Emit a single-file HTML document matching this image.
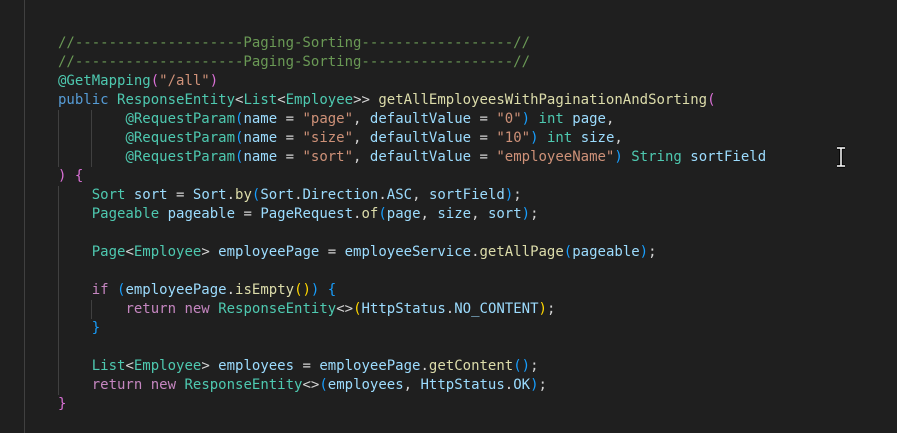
<!DOCTYPE html>
<html><head><meta charset="utf-8"><style>
html,body{margin:0;padding:0;background:#1f1f1f;width:897px;height:433px;overflow:hidden}
.g{position:absolute;width:1px;background:#404040}
pre{position:absolute;left:58px;top:34px;margin:0;font-family:"DejaVu Sans Mono","Liberation Mono",monospace;font-size:14px;line-height:19px;color:#d4d4d4}
.c{color:#6a9955}.t{color:#4ec9b0}.k{color:#569cd6}.f{color:#dcdcaa}.v{color:#9cdcfe}.s{color:#ce9178}.r{color:#c586c0}
.y{color:#ffd700}.p{color:#da70d6}.b{color:#179fff}
</style></head><body>
<div class="g" style="left:24px;top:0;height:433px"></div>
<div class="g" style="left:58px;top:110px;height:57px"></div>
<div class="g" style="left:91px;top:110px;height:57px"></div>
<div class="g" style="left:58px;top:186px;height:209px"></div>
<div class="g" style="left:91px;top:300px;height:19px"></div>
<pre><span class="c">//--------------------Paging-Sorting------------------//</span>
<span class="c">//--------------------Paging-Sorting------------------//</span>
<span class="t">@GetMapping</span><span class="p">(</span><span class="s">"/all"</span><span class="p">)</span>
<span class="k">public</span> <span class="t">ResponseEntity</span>&lt;<span class="t">List</span>&lt;<span class="t">Employee</span>&gt;&gt; <span class="f">getAllEmployeesWithPaginationAndSorting</span><span class="p">(</span>
        <span class="t">@RequestParam</span><span class="b">(</span><span class="v">name</span> = <span class="s">"page"</span>, <span class="v">defaultValue</span> = <span class="s">"0"</span><span class="b">)</span> <span class="t">int</span> <span class="v">page</span>,
        <span class="t">@RequestParam</span><span class="b">(</span><span class="v">name</span> = <span class="s">"size"</span>, <span class="v">defaultValue</span> = <span class="s">"10"</span><span class="b">)</span> <span class="t">int</span> <span class="v">size</span>,
        <span class="t">@RequestParam</span><span class="b">(</span><span class="v">name</span> = <span class="s">"sort"</span>, <span class="v">defaultValue</span> = <span class="s">"employeeName"</span><span class="b">)</span> <span class="t">String</span> <span class="v">sortField</span>
<span class="p">)</span> <span class="p">{</span>
    <span class="t">Sort</span> <span class="v">sort</span> = <span class="v">Sort</span>.<span class="f">by</span><span class="b">(</span><span class="v">Sort</span>.<span class="v">Direction</span>.<span class="v">ASC</span>, <span class="v">sortField</span><span class="b">)</span>;
    <span class="t">Pageable</span> <span class="v">pageable</span> = <span class="v">PageRequest</span>.<span class="f">of</span><span class="b">(</span><span class="v">page</span>, <span class="v">size</span>, <span class="v">sort</span><span class="b">)</span>;

    <span class="t">Page</span>&lt;<span class="t">Employee</span>&gt; <span class="v">employeePage</span> = <span class="v">employeeService</span>.<span class="f">getAllPage</span><span class="b">(</span><span class="v">pageable</span><span class="b">)</span>;

    <span class="r">if</span> <span class="b">(</span><span class="v">employeePage</span>.<span class="f">isEmpty</span><span class="y">()</span><span class="b">)</span> <span class="b">{</span>
        <span class="r">return</span> <span class="r">new</span> <span class="t">ResponseEntity</span>&lt;&gt;<span class="y">(</span><span class="v">HttpStatus</span>.<span class="v">NO_CONTENT</span><span class="y">)</span>;
    <span class="b">}</span>

    <span class="t">List</span>&lt;<span class="t">Employee</span>&gt; <span class="v">employees</span> = <span class="v">employeePage</span>.<span class="f">getContent</span><span class="b">()</span>;
    <span class="r">return</span> <span class="r">new</span> <span class="t">ResponseEntity</span>&lt;&gt;<span class="b">(</span><span class="v">employees</span>, <span class="v">HttpStatus</span>.<span class="v">OK</span><span class="b">)</span>;
<span class="p">}</span></pre>
<svg style="position:absolute;left:835px;top:146px" width="12" height="22" viewBox="0 0 12 22"><path d="M2 2h8M2 20h8M6 2v18" stroke="#000" stroke-width="3.5" fill="none"/><path d="M2 2h8M2 20h8M6 2v18" stroke="#fff" stroke-width="1.5" fill="none"/></svg>
</body></html>
